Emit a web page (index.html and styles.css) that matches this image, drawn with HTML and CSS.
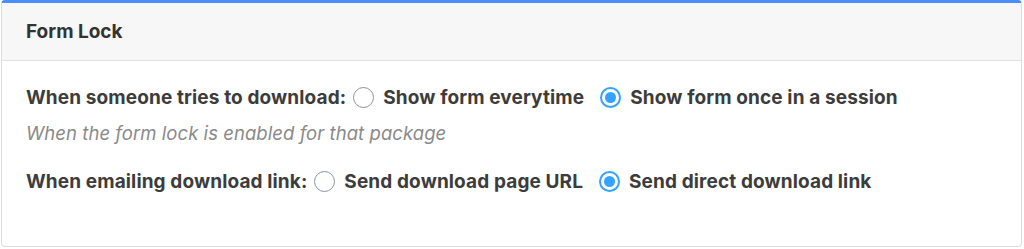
FILE: index.html
```html
<!DOCTYPE html>
<html>
<head>
<meta charset="utf-8">
<link rel="stylesheet" href="styles.css">
</head>
<body>
<div class="panel">
  <div class="panel-head">Form Lock</div>
  <div class="panel-body">
    <div class="row">
      <span class="label">When someone tries to download:</span>
      <label class="opt"><span class="radio"></span>Show form everytime</label>
      <label class="opt"><span class="radio on"></span>Show form once in a session</label>
    </div>
    <div class="hint">When the form lock is enabled for that package</div>
    <div class="row row2">
      <span class="label">When emailing download link:</span>
      <label class="opt"><span class="radio"></span>Send download page URL</label>
      <label class="opt"><span class="radio on"></span>Send direct download link</label>
    </div>
  </div>
</div>
</body>
</html>
```
FILE: styles.css
```css
html, body {
  margin: 0;
  padding: 0;
  background: #ffffff;
}
body {
  padding: 0 2px 1px 1px;
  font-family: Inter, "Liberation Sans", Arial, sans-serif;
  color: #333;
}
.panel {
  border: 1px solid #dcdcdc;
  border-top: 3px solid #4b8ef7;
  border-radius: 4px;
  height: 247px;
  box-sizing: border-box;
}
.panel-head {
  background: #f7f7f7;
  border-bottom: 1px solid #e2e2e2;
  height: 58px;
  box-sizing: border-box;
  padding: 0 24px;
  display: flex;
  align-items: center;
  font-weight: 700;
  font-size: 19px;
  color: #333;
}
.panel-body {
  padding: 21px 24px 0;
}
.row {
  display: flex;
  align-items: center;
  height: 30px;
  font-weight: 700;
  font-size: 19px;
  letter-spacing: 0.12px;
  color: #3c3c3c;
}
.label {
  margin-right: 7px;
}
.opt {
  display: flex;
  align-items: center;
  margin-right: 16px;
}
.radio {
  width: 21px;
  height: 21px;
  box-sizing: border-box;
  border: 1.5px solid #8c929a;
  border-radius: 50%;
  margin-right: 9px;
  background: #fff;
  position: relative;
}
.radio.on {
  border: 2px solid #33a3ff;
}
.radio.on::after {
  content: "";
  position: absolute;
  left: 3px;
  top: 3px;
  width: 11px;
  height: 11px;
  border-radius: 50%;
  background: #33a3ff;
}
.hint {
  font-style: italic;
  color: #8a8a8a;
  font-size: 18.5px;
  letter-spacing: 0.06px;
  margin-top: 10px;
  height: 22px;
}
.row2 {
  margin-top: 22px;
}
```
